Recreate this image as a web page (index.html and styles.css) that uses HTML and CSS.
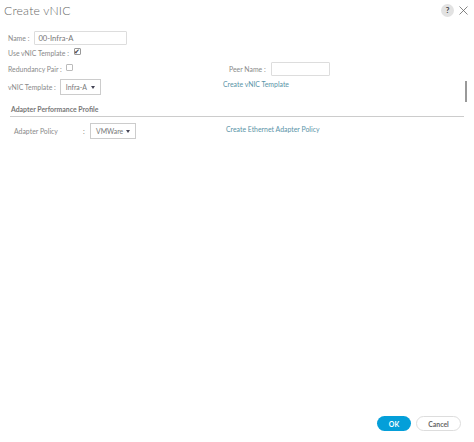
FILE: index.html
```html
<!DOCTYPE html>
<html lang="en">
<head>
    <meta charset="UTF-8">
    <title>Create vNIC</title>
    <link rel="stylesheet" href="styles.css">
</head>
<body>
    <div class="dialog">
        <div class="header">
            <div class="title">Create vNIC</div>
            <div class="header-icons">
                <span class="help">?</span>
                <svg class="close" width="9" height="9" viewBox="0 0 9 9"><path d="M0.5 0.5L8.5 8.5M8.5 0.5L0.5 8.5" stroke="#666" stroke-width="0.8" fill="none"/></svg>
            </div>
        </div>
        <div class="content">
            <div class="row name-row">
                <label>Name :</label>
                <input class="text-input name-input" type="text" value="00-Infra-A">
            </div>
            <div class="row template-row">
                <label>Use vNIC Template :</label>
                <span class="checkbox checked">&#10004;</span>
            </div>
            <div class="row pair-row">
                <div class="col-left">
                    <label>Redundancy Pair :</label>
                    <span class="checkbox"></span>
                </div>
                <div class="col-right">
                    <label>Peer Name :</label>
                    <input class="text-input peer-input" type="text">
                </div>
            </div>
            <div class="row select-row">
                <div class="col-left">
                    <label>vNIC Template :</label>
                    <div class="select template-select">Infra-A <span class="caret"></span></div>
                </div>
                <a class="link template-link">Create vNIC Template</a>
            </div>
            <div class="section-title">Adapter Performance Profile</div>
            <div class="row policy-row">
                <div class="col-left">
                    <label class="policy-label">Adapter Policy</label>
                    <span class="colon">:</span>
                    <div class="select policy-select">VMWare <span class="caret"></span></div>
                </div>
                <a class="link policy-link">Create Ethernet Adapter Policy</a>
            </div>
            <div class="scrollbar"></div>
        </div>
        <div class="footer">
            <button class="btn btn-ok">OK</button>
            <button class="btn btn-cancel">Cancel</button>
        </div>
    </div>
</body>
</html>
```

FILE: styles.css
```css
body {
    margin: 0;
    padding: 0;
    background-color: #fff;
    font-family: Lato, "Open Sans", sans-serif;
    color: #777;
}
.dialog {
    height: 442px;
    display: flex;
    flex-direction: column;
}
.header {
    height: 21px;
    padding: 0 6px 0 4px;
    display: flex;
    justify-content: space-between;
    align-items: center;
}
.title {
    font-size: 12.2px;
    font-weight: 300;
    color: #666;
    letter-spacing: 0.2px;
}
.header-icons {
    display: flex;
    align-items: center;
    gap: 5px;
}
.help {
    width: 13px;
    height: 13px;
    border-radius: 50%;
    background-color: #e2e2e2;
    color: #444;
    font-size: 8px;
    font-weight: 700;
    line-height: 13px;
    text-align: center;
}
.content {
    flex: 1;
    position: relative;
    padding-top: 10px;
    font-size: 6.9px;
}
.row {
    display: flex;
    align-items: center;
}
.col-left {
    display: flex;
    align-items: center;
}
.col-right {
    display: flex;
    align-items: center;
    gap: 5px;
}
label {
    color: #8a8a8a;
}
.name-row {
    height: 14px;
    padding-left: 8px;
    gap: 5px;
}
.template-row {
    height: 16px;
    padding-left: 8px;
    gap: 5px;
}
.pair-row {
    height: 15px;
    padding-left: 8px;
}
.pair-row .col-left {
    width: 221px;
    gap: 4px;
}
.select-row {
    height: 18px;
    margin-top: 2px;
    padding-left: 8px;
}
.select-row .col-left {
    width: 215px;
    gap: 4px;
}
.text-input {
    box-sizing: border-box;
    border: 1px solid #ddd;
    border-radius: 1px;
    padding: 0 3px;
    font-family: inherit;
    font-size: 7.6px;
    color: #777;
    outline: none;
}
.name-input {
    width: 93px;
    height: 14px;
}
.peer-input {
    width: 59px;
    height: 14px;
}
.checkbox {
    box-sizing: border-box;
    width: 7px;
    height: 7px;
    border: 1px solid #bbb;
    border-radius: 1px;
    margin-bottom: 3px;
    display: flex;
    align-items: center;
    justify-content: center;
    font-size: 7px;
    line-height: 7px;
    color: #444;
}
.checkbox.checked {
    border-color: #999;
}
.select {
    box-sizing: border-box;
    display: flex;
    align-items: center;
    justify-content: space-between;
    height: 16px;
    border: 1px solid #ccc;
    padding: 0 5px;
    color: #777;
    font-size: 6.9px;
}
.template-select {
    width: 41px;
}
.policy-select {
    width: 46px;
}
.caret {
    width: 0;
    height: 0;
    border-left: 2px solid transparent;
    border-right: 2px solid transparent;
    border-top: 3px solid #445;
}
.link {
    color: #5a94a8;
    font-size: 6.9px;
}
.template-link {
    margin-bottom: 6px;
}
.section-title {
    margin: 9px 10px 0;
    padding: 0 1px 2px;
    height: 9px;
    line-height: 9px;
    border-bottom: 1.5px solid #ccc;
    font-size: 6.9px;
    font-weight: 700;
    color: #777;
}
.policy-row {
    height: 16px;
    margin-top: 6px;
    padding-left: 14px;
}
.policy-row .col-left {
    width: 212px;
}
.policy-label {
    width: 69px;
}
.colon {
    width: 7px;
}
.policy-link {
    margin-bottom: 5px;
}
.scrollbar {
    position: absolute;
    left: 465px;
    top: 60px;
    width: 2px;
    height: 21px;
    background-color: #999;
}
.footer {
    height: 26px;
    padding-right: 13px;
    display: flex;
    justify-content: flex-end;
    align-items: flex-start;
    gap: 5px;
}
.btn {
    height: 15px;
    border-radius: 8px;
    padding: 0;
    font-family: inherit;
    font-size: 6.9px;
    font-weight: 700;
}
.btn-ok {
    width: 34px;
    border: none;
    background-color: #049fd9;
    color: #fff;
}
.btn-cancel {
    width: 45px;
    border: 1px solid #ddd;
    background-color: #fff;
    color: #666;
}
```
